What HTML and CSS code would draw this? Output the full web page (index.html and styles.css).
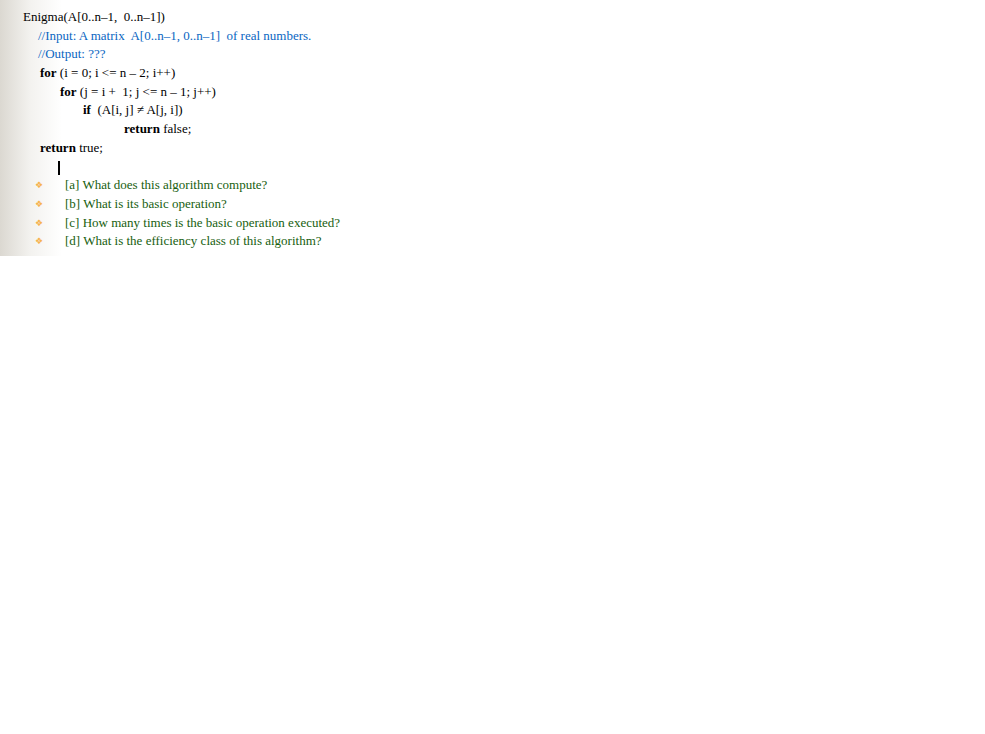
FILE: index.html
```html
<!DOCTYPE html>
<html lang="en">
<head>
    <meta charset="UTF-8">
    <title>Enigma</title>
    <link rel="stylesheet" href="styles.css">
</head>
<body>
<div class="slide">
    <div class="code">
        <div class="line title">Enigma(A[0..n&ndash;1,&nbsp; 0..n&ndash;1])</div>
        <div class="line comment ind1">//Input: A matrix&nbsp; A[0..n&ndash;1, 0..n&ndash;1]&nbsp; of real numbers.</div>
        <div class="line comment ind1">//Output: ???</div>
        <div class="line ind2"><b>for</b> (i = 0; i &lt;= n &ndash; 2; i++)</div>
        <div class="line ind3"><b>for</b> (j = i +&nbsp; 1; j &lt;= n &ndash; 1; j++)</div>
        <div class="line ind4"><b>if</b>&nbsp; (A[i, j] &ne; A[j, i])</div>
        <div class="line ind5"><b>return</b> false;</div>
        <div class="line ind2"><b>return</b> true;</div>
        <div class="line ind6"><span class="cursor"></span></div>
    </div>
    <ul class="questions">
        <li><span class="dot">&#10070;</span>[a] What does this algorithm compute?</li>
        <li><span class="dot">&#10070;</span>[b] What is its basic operation?</li>
        <li><span class="dot">&#10070;</span>[c] How many times is the basic operation executed?</li>
        <li><span class="dot">&#10070;</span>[d] What is the efficiency class of this algorithm?</li>
    </ul>
</div>
</body>
</html>
```

FILE: styles.css
```css
*{
    margin: 0;
    padding: 0;
    list-style: none;
}
html,body{
    width: 100%;
    height: 100%;
    background: #fff;
}
.slide{
    height: 256px;
    padding-top: 8px;
    box-sizing: border-box;
    background: linear-gradient(to right, #dbd8d1 0, #f3f2ef 30px, #fff 62px);
    font-family: "Liberation Serif", "Times New Roman", serif;
    font-size: 13px;
    color: #000;
}
.line{
    height: 18.7px;
    line-height: 18.7px;
    white-space: nowrap;
}
.title{
    padding-left: 23px;
}
.comment{
    color: #0a66c2;
}
.ind1{
    padding-left: 38px;
}
.ind2{
    padding-left: 40px;
}
.ind3{
    padding-left: 60px;
}
.ind4{
    padding-left: 83px;
}
.ind5{
    padding-left: 124px;
}
.ind6{
    padding-left: 58px;
}
.cursor{
    display: inline-block;
    width: 2px;
    height: 14px;
    background: #000;
    vertical-align: middle;
}
.questions li{
    height: 18.7px;
    line-height: 18.7px;
    color: #17600f;
    white-space: nowrap;
    display: flex;
    align-items: center;
}
.questions .dot{
    width: 30px;
    padding-left: 35px;
    font-family: "DejaVu Sans", sans-serif;
    font-size: 9px;
    color: #f6b24e;
}
```
